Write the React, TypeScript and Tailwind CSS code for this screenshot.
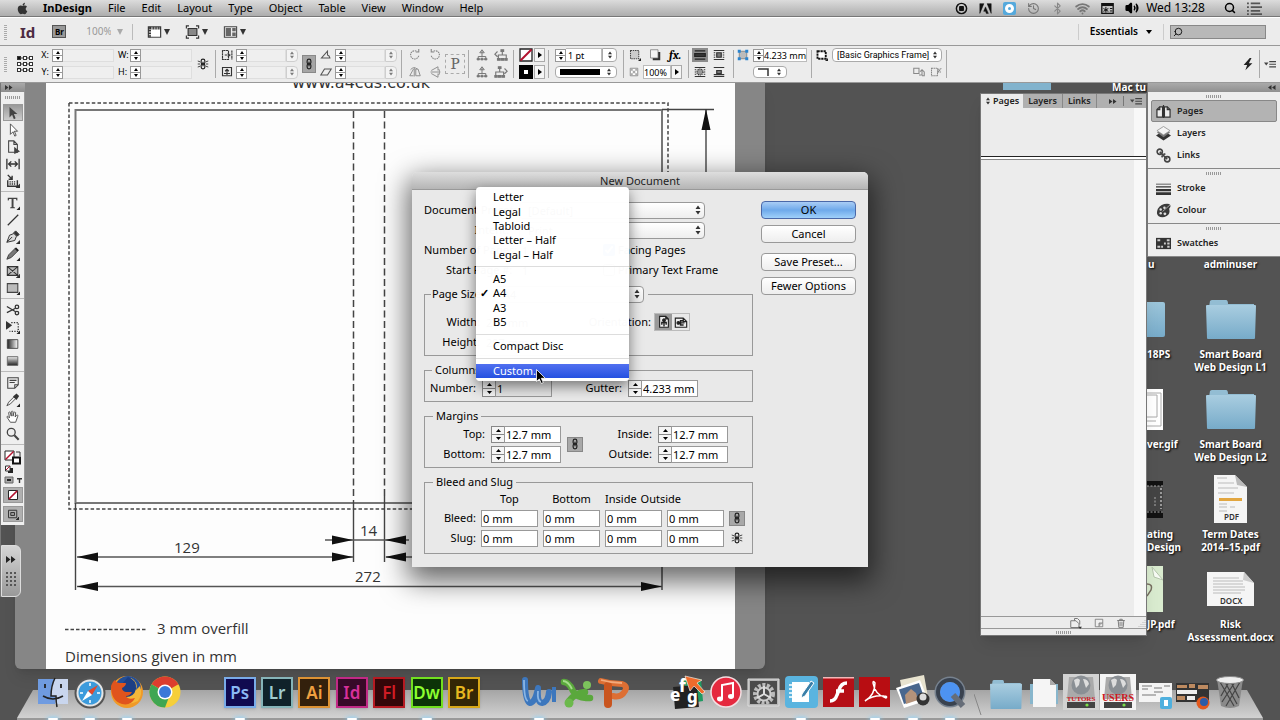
import React from 'react';
import { LuBluetooth, LuHistory, LuSearch, LuVolume2, LuWifi } from 'react-icons/lu';
import { FaApple } from 'react-icons/fa';

type IconProps = { name: string; className?: string };

const LINK = (
  <g fill="none" stroke="#222" strokeWidth="1.6">
    <rect x="5.5" y="1.5" width="5" height="7" rx="2.5" />
    <rect x="5.5" y="7.5" width="5" height="7" rx="2.5" />
    <path d="M8 5v6" />
  </g>
);

const corner = <path d="M16 12v4h-4z" fill="#222" />;

const glyphs: Record<string, React.ReactNode> = {
  link: LINK,
  unlink: (
    <g>
      {LINK}
      <path d="M1 4l3 1M1 8h3M1 12l3-1M15 4l-3 1M15 8h-3M15 12l-3-1" stroke="#444" strokeWidth="1.3" />
    </g>
  ),
  select: <path d="M4 1v12l3-3 2 5 2-1-2-5h4z" fill="#444" />,
  direct: <path d="M5 1v12l3-3 2 5 1.600-.8-2-4.800h3.600z" fill="#fff" stroke="#444" />,
  page: (
    <g fill="none" stroke="#444" strokeWidth="1.2">
      <path d="M3 1h6l4 4v9H3zM9 1v4h4" />
      <path d="M10 9l5 4-5 2z" fill="#444" />
    </g>
  ),
  gap: <path d="M1 2v12M15 2v12M3 8h10M6 5L3 8l3 3M10 5l3 3-3 3" fill="none" stroke="#333" strokeWidth="1.5" />,
  collector: (
    <g fill="none" stroke="#333" strokeWidth="1.6">
      <path d="M2 7v7h11V7M2 1l5 5M7 2v4H3" />
      <path d="M4 9h7M4 11.500h7" strokeDasharray="1.500 1" />
      {corner}
    </g>
  ),
  type: (
    <g>
      <path d="M2 2h11v3h-1l-.6-1.600H8.600v9.200l1.700.6v.8H4.700v-.8l1.700-.6V3.400H3.600L3 5H2z" fill="#444" />
      {corner}
    </g>
  ),
  line: <path d="M2 14L14 2" stroke="#333" strokeWidth="1.4" />,
  pen: (
    <g fill="#ddd" stroke="#333" strokeWidth="1.100">
      <path d="M1 14l3-8 5-2 3 3-2 5zM1 14l6-6" />
      <path d="M9 3l2-2 4 4-2 2z" fill="#333" />
      {corner}
    </g>
  ),
  pencil: (
    <g>
      <path d="M1 14l2-5 8-8 3 3-8 8z" fill="#777" stroke="#333" />
      <path d="M10 2l3 3 1.500-1.500-3-3z" fill="#222" />
      {corner}
    </g>
  ),
  frame: (
    <g fill="#bbb" stroke="#333" strokeWidth="1.200">
      <path d="M1.500 3h12v10h-12zM1.500 3l12 10M13.500 3l-12 10" />
      {corner}
    </g>
  ),
  rect: (
    <g>
      <path d="M1.500 3h12v10h-12z" fill="#bbb" stroke="#444" strokeWidth="1.200" />
      {corner}
    </g>
  ),
  scissors: (
    <g fill="none" stroke="#333" strokeWidth="1.500">
      <path d="M1 4l10 6M1 11l10-5" />
      <circle cx="12.500" cy="4.500" r="2" />
      <circle cx="12.500" cy="11.500" r="2" />
    </g>
  ),
  transform: (
    <g>
      <path d="M0 1v10l3-2 4-3z" fill="#333" />
      <path d="M6 3h8v10H4" fill="none" stroke="#333" strokeWidth="1.500" strokeDasharray="1.500 1.500" />
      {corner}
    </g>
  ),
  gradient: (
    <g>
      <defs>
        <linearGradient id="gr-h">
          <stop stopColor="#222" />
          <stop offset="1" stopColor="#fff" />
        </linearGradient>
      </defs>
      <path d="M1.500 3h12v10h-12z" fill="url(#gr-h)" stroke="#444" />
    </g>
  ),
  feather: (
    <g>
      <defs>
        <linearGradient id="gr-v" x2="0" y2="1">
          <stop stopColor="#eee" />
          <stop offset="1" stopColor="#222" />
        </linearGradient>
      </defs>
      <path d="M1.500 3h12v10h-12z" fill="url(#gr-v)" stroke="#666" />
    </g>
  ),
  note: (
    <g fill="#eee" stroke="#444" strokeWidth="1.200">
      <path d="M2 2h12v8l-4 4H2zM10 14v-4h4M4 5h8M4 7.500h6" />
    </g>
  ),
  eyedropper: (
    <g>
      <path d="M1 14.500l2-4 6-6 2 2-6 6z" fill="#eee" stroke="#444" />
      <path d="M8 4l4-3.500 3 3L12 8z" fill="#333" />
      {corner}
    </g>
  ),
  hand: (
    <path
      d="M5 14l-4-6c0-1 1-1 2 0l1 1-1-6c.5-1 1.500-1 2 0l1 4V2c.5-1 1.500-1 2 0v5l1-4c.5-1 1.500-1 2 0l-.5 5 1.500-2c1-1 1.800 0 1.500 1L11 14z"
      fill="#fff"
      stroke="#444"
    />
  ),
  zoom: (
    <g fill="none" stroke="#444">
      <circle cx="6" cy="6" r="4.500" strokeWidth="1.500" fill="#eee" />
      <path d="M9.500 9.500l5 5" strokeWidth="2.400" />
    </g>
  ),
  none: (
    <g>
      <path d="M2 2h12v12H2z" fill="#fff" stroke="#222" strokeWidth="1.300" />
      <path d="M2.500 13.500l11-11" stroke="#b3122f" strokeWidth="2" />
    </g>
  ),
  preview: (
    <g fill="none" stroke="#333" strokeWidth="1.300">
      <path d="M2 3h11v10H2z" />
      <path d="M5 6h5v4H5z" fill="#999" />
      {corner}
    </g>
  ),
  reference: (
    <g fill="#fff" stroke="#333" strokeWidth="1">
      {[2, 8, 14].map((y) => (
        <g key={y}>
          <path d={`M2 ${y}h12`} />
          {[2, 8, 14].map((x) => (
            <rect key={x} x={x - 1.5} y={y - 1.5} width="3" height="3" fill={x + y === 4 ? '#111' : '#fff'} />
          ))}
        </g>
      ))}
    </g>
  ),
  scaleX: <path d="M2 2v12h8V2z M5 8h6M9 5.500l3 2.500-3 2.500M14.500 2v12" fill="none" stroke="#333" strokeWidth="1.500" strokeDasharray="3 .6" />,
  scaleY: <path d="M2 2h12v11H2zM8 12V5M5.500 7L8 4.500 10.500 7M4 10h8" fill="none" stroke="#333" strokeWidth="1.500" />,
  angle: <path d="M14 12H2l8-9v5q3 1 3 4" fill="none" stroke="#555" strokeWidth="1.400" />,
  shear: <path d="M6 4h9l-5 8H1z" fill="none" stroke="#555" strokeWidth="1.500" />,
  rotateR: (
    <g fill="none" stroke="#888" strokeWidth="1.500">
      <path d="M13 9a5.500 5.500 0 1 1-2-5.500" strokeDasharray="2 1" />
      <path d="M9 4h4V0" />
    </g>
  ),
  rotateL: (
    <g fill="none" stroke="#888" strokeWidth="1.500">
      <path d="M3 9a5.500 5.500 0 1 0 2-5.500" strokeDasharray="2 1" />
      <path d="M7 4H3V0" />
    </g>
  ),
  flipH: <path d="M7 2v12M6 4L1 13h5M9 4h3l3 9H9zM2 5q4-5 9-1" fill="none" stroke="#888" strokeWidth="1.200" />,
  flipV: <path d="M2 8h12M3 6l9-5v5M3 10l9 5v-5M13 4q3 4 0 8" fill="none" stroke="#888" strokeWidth="1.200" />,
  tree: (
    <g fill="none" stroke="#777" strokeWidth="1.300">
      <path d="M8 2v9M3 13v-3h10v3M5 5l3-4 3 4z" />
      <path d="M1.500 12.500h3v2h-3zM6.500 12.500h3v2h-3zM11.500 12.500h3v2h-3z" fill="#777" />
    </g>
  ),
  treeSide: (
    <g fill="none" stroke="#777" strokeWidth="1.300">
      <path d="M5 12V8h9v4M9.500 8V4M4 4L1 7l3 3" />
      <path d="M8 2h3v2H8zM4 12h3v2H4zM8.500 12h3v2h-3zM13 12h2v2h-2z" fill="#777" />
    </g>
  ),
  dottedBox: (
    <g>
      <path d="M2 2h11v11H2z" fill="#ccc" stroke="#444" strokeWidth="1.400" strokeDasharray="2 1" />
      {corner}
    </g>
  ),
  shadowBox: (
    <g>
      <path d="M5 4h10v11H5z" fill="#333" />
      <path d="M2 1h10v11H2z" fill="#f4f4f4" stroke="#777" />
    </g>
  ),
  opacity: (
    <g>
      <path d="M2 2h12v12H2z" fill="#fff" stroke="#555" />
      <path d="M2 2h4v4H2zM10 2h4v4h-4zM6 6h4v4H6zM2 10h4v4H2zM10 10h4v4h-4z" fill="#aaa" />
    </g>
  ),
  wrapNone: <path d="M1 2.500h14M1 13.500h14M1 6h14v4H1z" fill="#333" stroke="#222" strokeWidth="1.600" />,
  wrapBox: (
    <g fill="none" stroke="#333" strokeWidth="1.600">
      <path d="M1 2h14M1 14h14M1 5h2M1 8h2M1 11h2M13 5h2M13 8h2M13 11h2" />
      <path d="M5 5h6v6H5z" fill="#777" />
    </g>
  ),
  wrapShape: (
    <g fill="none" stroke="#333" strokeWidth="1.600">
      <path d="M1 2h14M1 14h14M1 5h2M1 8h2M1 11h2M13 5h2M13 8h2M13 11h2" />
      <circle cx="8" cy="8" r="4" fill="#999" strokeDasharray="1.500 1" />
    </g>
  ),
  wrapJump: <path d="M1 2h14M1 14h14M5 6h6v4H5z M1 11.500h14" fill="#777" stroke="#333" strokeWidth="1.600" />,
  cornerBox: (
    <g>
      <path d="M3 3h10v10H3z" fill="#bbb" stroke="#777" />
      <path d="M1 1h4v4H1zM11 1h4v4h-4zM1 11h4v4H1zM11 11h4v4h-4z" fill="#2a84cf" />
    </g>
  ),
  style: (
    <g>
      <path d="M2 3h11v10H2z" fill="#fff" stroke="#111" strokeWidth="2.500" strokeDasharray="3 1" />
      {corner}
    </g>
  ),
  clear: <path d="M1 3h7v7H1zM8 12h4V5M9.500 7.500L12 5l3 3v5h-3" fill="none" stroke="#888" strokeWidth="1.400" />,
  clearBox: <path d="M2 3h8v10H2zM15 3l-4 5h4M11 8l1-5" fill="none" stroke="#888" strokeWidth="1.400" strokeDasharray="2 .7" />,
  bolt: <path d="M10 1L3 9h4l-2 6 8-8H9l3-6z" fill="#222" />,
  panelMenu: <path d="M0 6h6L3 10zM7 4h9v1.500H7zM7 7.500h9V9H7zM7 11h9v1.500H7z" fill="#444" />,
  viewRulers: (
    <g>
      <path d="M1 2h14v12H1z" fill="#fff" stroke="#444" strokeWidth="1.400" />
      <path d="M1 3.500h14M2.500 2v12" stroke="#333" strokeWidth="3" strokeDasharray="1.200 .6" />
    </g>
  ),
  screenMode: (
    <g fill="none" stroke="#333" strokeWidth="1.300">
      <path d="M1 4V1h3M12 1h3v3M15 12v3h-3M4 15H1v-3" />
      <path d="M3 4h10v8H3z" fill="#888" />
    </g>
  ),
  arrange: (
    <g>
      <path d="M1 2h14v12H1z" fill="#eee" stroke="#444" strokeWidth="1.200" />
      <path d="M2.500 3.500h6v9h-6zM10 3.500h4V7h-4zM10 8.500h4v4h-4z" fill="#666" />
    </g>
  ),
  pages: (
    <g fill="#eee" stroke="#333" strokeWidth="1.300">
      <path d="M7 3v11H1V6l3-3zM9 3v11h6V6l-3-3z" />
      <path d="M8 1v14M4 3v3H1M12 3v3h3" fill="none" />
    </g>
  ),
  layers: (
    <g>
      <path d="M8 5l8 5-8 5.500L0 10z" fill="#333" />
      <path d="M8 3l7 4-7 5-7-5z" fill="#777" />
      <path d="M8 .500l7 4.500-7 4.500L1 5z" fill="#f4f4f4" stroke="#888" strokeWidth=".8" />
    </g>
  ),
  links: (
    <g fill="none" stroke="#444" strokeWidth="1.700">
      <circle cx="4" cy="4" r="2.800" />
      <circle cx="12" cy="12" r="2.800" />
      <path d="M4 4l8 8M8 6l2 1M6 8l1 2" />
    </g>
  ),
  stroke: <path d="M0 3h16v.8H0zM0 5.500h16V7H0zM0 8.500h16v2.300H0zM0 12h16v3H0z" fill="#333" />,
  colour: (
    <g>
      <path d="M2 6Q6 0 14 1q3 2 0 5 2 7-5 9Q2 16 1 11q0-3 1-5z" fill="#3a3a3a" />
      <g fill="#ddd">
        <circle cx="5" cy="7" r="1.300" />
        <circle cx="9" cy="5" r="1.300" />
        <circle cx="5" cy="11" r="1.300" />
        <circle cx="9.500" cy="11.500" r="1.500" />
      </g>
      <path d="M7 9l8-7" stroke="#aaa" />
    </g>
  ),
  swatches: (
    <g>
      <path d="M0 2h16v12H0z" fill="#333" />
      <path d="M1.500 3.500h3v2h-3zM11.500 3.500h3v2h-3zM8.500 7h2v2h-2zM12 7h2.500v2H12zM1.500 10.500h3v2h-3zM5.500 10.500h2v2h-2zM12 10.500h2.500v2H12z" fill="#ccc" />
    </g>
  ),
  trash: <path d="M2 4h12M6 4V2h4v2M3.500 4l1 11h7l1-11M6.500 6v7M9.500 6v7" fill="none" stroke="#777" strokeWidth="1.500" />,
  newPage: (
    <g fill="#eee" stroke="#777" strokeWidth="1.300">
      <path d="M2 2h12v12H2z" />
      <path d="M8 14V8h6" fill="#bbb" />
    </g>
  ),
  editPage: (
    <g fill="#eee" stroke="#777" strokeWidth="1.300">
      <path d="M1 5h7l4 4v5H1zM6 5V2h4l3 3v5" />
      <path d="M11 13h5l-2.500 3z" fill="#333" stroke="none" />
    </g>
  ),
  resize: <path d="M14 2v1M14 6v1M14 10v1M14 14v1M10 6v1M10 10v1M10 14v1M6 10v1M6 14v1M2 14v1" stroke="#888" strokeWidth="2" />,
  portrait: (
    <g fill="#eee" stroke="#222" strokeWidth="1.300">
      <path d="M3 1.500h7l3 3V14H3zM10 1.500v3h3" />
      <circle cx="8" cy="6" r="1.500" fill="#222" />
      <path d="M5.500 11V8.500h5V11M8 8v5" fill="none" strokeWidth="1.600" />
    </g>
  ),
  landscape: (
    <g fill="#eee" stroke="#222" strokeWidth="1.300">
      <path d="M1.500 3.500h9l4 4V14h-13zM10.500 3.500v4h4" />
      <circle cx="5" cy="9" r="1.500" fill="#222" />
      <path d="M11 6.500H7.500v5H11M7 9h5" fill="none" strokeWidth="1.600" />
    </g>
  ),
  record: (
    <g>
      <circle cx="8" cy="8" r="6.300" fill="none" stroke="#111" strokeWidth="1.800" />
      <rect x="5" y="5" width="6" height="6" rx="1" fill="#111" />
    </g>
  ),
  adobe: <path d="M1 2h5L1 14zM10 2h5v12zM8 6l3.500 8H9l-1-2.500H5.800z" fill="#111" stroke="#111" strokeWidth=".6" />,
  keyboard: (
    <g>
      <path d="M1 2h14v12H1z" fill="none" stroke="#111" strokeWidth="1.600" />
      <path d="M1 2h14v3H1z" fill="#111" />
      <path d="M6 6v7M3 8l6 3.500M9 8l-6 3.500M11 8h3M11 11h3" stroke="#111" strokeWidth="1.200" />
    </g>
  ),
  list: <path d="M0 2.500h2M4 2.500h10M0 6.500h2M4 6.500h12M0 10.500h2M4 10.500h10M0 14h2M4 14h12" stroke="#555" strokeWidth="1.800" />,
};

const Icon: React.FC<IconProps> = ({ name, className = 'size-3.5' }) => (
  <svg viewBox="0 0 16 16" className={`shrink-0 ${className}`} aria-hidden="true">
    {glyphs[name]}
  </svg>
);

const Caret = ({ className = 'text-[#333]' }: { className?: string }) => (
  <svg viewBox="0 0 6 6" className={`size-1.5 shrink-0 ${className}`} aria-hidden="true">
    <path d="M0 0h6L3 6z" fill="currentColor" />
  </svg>
);

const UpDown = ({ className = 'h-2.5' }: { className?: string }) => (
  <svg viewBox="0 0 6 10" className={`w-1.5 shrink-0 ${className}`} aria-hidden="true">
    <path d="M.5 4L3 .5 5.500 4zM.5 6L3 9.500 5.500 6z" fill="#333" />
  </svg>
);

const Grip = () => (
  <div className="h-[3px] w-4 bg-[repeating-linear-gradient(90deg,#999_0_1px,#eee_1px_2px)]" />
);

const Divider = () => <div className="h-7 w-px shrink-0 bg-[#aaa]" />;

/* ---------- menu bar ---------- */

const menus = ['File', 'Edit', 'Layout', 'Type', 'Object', 'Table', 'View', 'Window', 'Help'];

const MenuBar = () => (
  <header className="flex h-[17px] shrink-0 items-center justify-between border-b border-[#777] bg-linear-to-b from-[#dcdcdc] to-[#adadad] pr-[18px] pl-4 text-[11px] leading-4 text-black">
    <nav className="flex items-center gap-4">
      <FaApple className="-mr-0.5 size-[13px] text-[#333]" />
      <b>InDesign</b>
      {menus.map((m) => (
        <a key={m} href="#">{m}</a>
      ))}
    </nav>
    <div className="flex items-center gap-[11px]">
      <Icon name="record" className="size-[13px]" />
      <Icon name="adobe" className="size-[13px]" />
      <span className="flex size-[13px] items-center justify-center rounded-xs bg-[#55a9dc]">
        <span className="size-[9px] rounded-full border-[3px] border-white" />
      </span>
      <LuHistory className="size-[13px] text-[#777]" />
      <LuBluetooth className="size-[13px] text-[#888]" />
      <LuWifi className="size-[15px] text-[#777]" strokeWidth={3} />
      <Icon name="keyboard" className="size-[13px]" />
      <LuVolume2 className="size-[14px] fill-black" strokeWidth={2.5} />
      <span className="-ml-1 text-[12px]">Wed 13:28</span>
      <LuSearch className="ml-2 size-[12px]" strokeWidth={3} />
      <Icon name="list" className="size-[15px]" />
    </div>
  </header>
);

/* ---------- application + control bars ---------- */

const BarGrip = () => (
  <div className="h-4 w-[3px] shrink-0 bg-[repeating-linear-gradient(0deg,#aaa_0_1px,#eee_1px_2px)]" />
);

const AppBar = () => (
  <div className="flex h-7 shrink-0 items-center border-t border-white bg-[#ececec] pl-1 text-[11px]">
    <BarGrip />
    <span className="ml-[13px] text-[15px] leading-4 font-bold text-[#4c2b42]">Id</span>
    <button className="ml-[17px] h-[13px] w-[14px] border border-[#555] bg-[#999] text-[8px] leading-[10px] font-bold">Br</button>
    <label className="ml-5 flex items-center gap-1.5 text-[#999]">
      <input aria-label="Zoom" className="w-[25px] bg-transparent text-[10px]" defaultValue="100%" />
      <Caret className="text-[#aaa]" />
    </label>
    <div className="mr-3.5 ml-[9px] h-4 w-px bg-[#bbb]" />
    <button className="mr-[15px] flex items-center gap-0.5" aria-label="View options"><Icon name="viewRulers" className="h-3.5 w-[15px]" /><Caret /></button>
    <button className="mr-[15px] flex items-center gap-0.5" aria-label="Screen mode"><Icon name="screenMode" className="h-3.5 w-[15px]" /><Caret /></button>
    <button className="flex items-center gap-0.5" aria-label="Arrange documents"><Icon name="arrange" className="h-3.5 w-[15px]" /><Caret /></button>
    <div className="ml-auto flex items-center pr-3.5">
      <div className="h-4 w-px bg-[#ccc]" />
      <button className="mx-[11px] flex items-center gap-2 text-[10px] font-semibold">Essentials <svg viewBox="0 0 6 6" className="size-1.5"><path d="M0 1h6L3 5z" /></svg></button>
      <div className="mr-1.5 h-4 w-px bg-[#ccc]" />
      <label className="flex h-3.5 w-24 items-center border border-[#888] bg-[#b8b8b8] px-0.5">
        <LuSearch className="size-2.5 shrink-0 -scale-x-100" />
        <input aria-label="Search" className="w-full bg-transparent" />
      </label>
    </div>
  </div>
);

const MiniStepper = () => (
  <span className="flex h-[13px] w-[11px] shrink-0 flex-col border border-[#999] bg-white">
    <button aria-label="Increase" className="flex flex-1 items-center justify-center border-b border-[#999]">
      <svg viewBox="0 0 4 3" className="h-[3px] w-1"><path d="M0 3L2 0l2 3z" /></svg>
    </button>
    <button aria-label="Decrease" className="flex flex-1 items-center justify-center">
      <svg viewBox="0 0 4 3" className="h-[3px] w-1"><path d="M0 0h4L2 3z" /></svg>
    </button>
  </span>
);

const BlankField = ({ label, icon, combo }: { label: string; icon?: string; combo?: boolean }) => (
  <label className="flex h-[17px] items-center">
    {icon ? <Icon name={icon} className="mr-[3px] size-3" /> : <span className="mr-[3px] w-[9px] text-right">{label}</span>}
    <MiniStepper />
    <input aria-label={label} className={`h-[13px] border border-l-0 border-[#dedede] bg-[#efefef] ${combo ? 'w-[39px]' : 'w-[51px]'}`} />
    {combo && (
      <span className="flex h-[13px] w-[12px] items-center justify-center rounded-r-sm border border-[#bbb] bg-[#f8f8f8] opacity-60">
        <UpDown className="h-2" />
      </span>
    )}
  </label>
);

const Pair = ({ children, className = '' }: { children: React.ReactNode; className?: string }) => (
  <div className={`flex shrink-0 flex-col *:h-[17px] ${className}`}>{children}</div>
);

const Row = ({ children }: { children: React.ReactNode }) => <div className="flex items-center">{children}</div>;

const NextButton = () => (
  <button aria-label="More" className="flex h-[14px] w-[11px] items-center justify-center border border-[#aaa] bg-[#f5f5f5]">
    <svg viewBox="0 0 4 6" className="h-1.5 w-1"><path d="M0 0l4 3-4 3z" /></svg>
  </button>
);

const ControlBar = () => (
  <div className="flex h-[38px] shrink-0 items-center overflow-hidden border-y border-[#999] bg-[#ececec] pb-px pl-1 text-[9px]">
    <BarGrip />
    <Icon name="reference" className="ml-2.5 size-4" />
    <Pair className="ml-[7px]">
      <BlankField label="X:" />
      <BlankField label="Y:" />
    </Pair>
    <Pair className="ml-1">
      <BlankField label="W:" />
      <BlankField label="H:" />
    </Pair>
    <Icon name="unlink" className="mr-1.5 ml-[5px] size-3" />
    <Divider />
    <Pair className="ml-[5px]">
      <BlankField label="Scale X" icon="scaleX" combo />
      <BlankField label="Scale Y" icon="scaleY" combo />
    </Pair>
    <button aria-label="Constrain scale" className="mx-1 flex h-[18px] w-[14px] items-center justify-center border border-[#888] bg-[#a5a5a5]">
      <Icon name="link" className="size-3" />
    </button>
    <Pair>
      <BlankField label="Rotation" icon="angle" combo />
      <BlankField label="Shear" icon="shear" combo />
    </Pair>
    <span className="w-1" />
    <Divider />
    <Pair className="ml-[7px] w-[30px]">
      <div className="flex items-center gap-2"><Icon name="rotateR" className="size-3" /><Icon name="rotateL" className="size-3" /></div>
      <div className="flex items-center gap-2"><Icon name="flipH" className="size-3" /><Icon name="flipV" className="size-3" /></div>
    </Pair>
    <span className="mr-[3px] ml-1.5 flex h-5 w-5 items-center justify-center border border-dashed border-[#aaa] font-serif text-[17px] text-[#666]">P</span>
    <Divider />
    <Pair className="mr-1 ml-[7px] w-[33px]">
      <div className="flex items-center gap-1.5"><Icon name="tree" className="size-3" /><Icon name="treeSide" /></div>
      <div className="flex items-center gap-1.5"><Icon name="tree" className="size-3" /><Icon name="treeSide" className="size-3.5 -scale-x-100" /></div>
    </Pair>
    <Divider />
    <Pair className="mr-[3px] ml-1">
      <Row><Icon name="none" className="size-4" /><NextButton /></Row>
      <Row>
        <span className="mx-px flex size-3.5 items-center justify-center bg-black"><span className="size-1 bg-white" /></span>
        <NextButton />
      </Row>
    </Pair>
    <Divider />
    <Pair className="mx-1.5 w-[62px]">
      <Row>
        <MiniStepper />
        <input aria-label="Stroke weight" className="h-[14px] w-9 border border-l-0 border-[#bbb] bg-white pl-0.5" defaultValue="1 pt" />
        <span className="flex h-[14px] flex-1 items-center justify-center rounded-r-sm border border-[#aaa] bg-white"><UpDown className="h-2" /></span>
      </Row>
      <Row>
        <button aria-label="Stroke type" className="flex h-3 w-full items-center justify-between rounded-sm border border-[#aaa] bg-white px-1">
          <span className="h-1.5 w-10 bg-black" />
          <UpDown className="h-2" />
        </button>
      </Row>
    </Pair>
    <Divider />
    <Pair className="mr-1 ml-[5px] w-[55px]">
      <div className="flex items-center gap-2"><Icon name="dottedBox" className="size-3" /><Icon name="shadowBox" className="size-3" /><i className="font-serif text-[12px] font-bold">fx.</i></div>
      <Row>
        <Icon name="opacity" className="mr-1 size-2.5" />
        <input aria-label="Opacity" className="h-[14px] w-[28px] border border-[#bbb] bg-white" defaultValue="100%" />
        <NextButton />
      </Row>
    </Pair>
    <Divider />
    <Pair className="mr-1 ml-[3px] w-[37px]">
      <div className="flex items-center gap-[5px]"><span className="flex h-[14px] w-4 items-center justify-center bg-[#8c8c8c]"><Icon name="wrapNone" className="size-3" /></span><Icon name="wrapBox" className="size-3" /></div>
      <div className="flex items-center gap-[7px] pl-0.5"><Icon name="wrapShape" className="size-3" /><Icon name="wrapJump" className="size-3" /></div>
    </Pair>
    <Divider />
    <Pair className="mr-1 ml-[3px] w-[70px]">
      <Row>
        <Icon name="cornerBox" className="mr-1 size-3" />
        <MiniStepper />
        <input aria-label="Corner size" className="h-[14px] w-[43px] border border-l-0 border-[#bbb] bg-white" defaultValue="4.233 mm" />
      </Row>
      <Row>
        <button aria-label="Corner shape" className="ml-4 flex h-3 w-[34px] items-center justify-between rounded-sm border border-[#aaa] bg-white px-1">
          <svg viewBox="0 0 12 8" className="h-2 w-3"><path d="M0 1h10v7" fill="none" stroke="#333" strokeWidth="1.500" /></svg>
          <UpDown className="h-2" />
        </button>
      </Row>
    </Pair>
    <Divider />
    <Pair className="mr-1 ml-1 w-[126px]">
      <Row>
        <Icon name="style" className="mr-1 size-3" />
        <span className="relative flex flex-1 items-center">
          <select aria-label="Object style" className="h-[14px] w-full appearance-none rounded-sm border border-[#aaa] bg-white pl-1 font-['Roboto','Noto_Sans',sans-serif] text-[9px] leading-3">
            <option>[Basic Graphics Frame]</option>
          </select>
          <span className="pointer-events-none absolute right-1"><UpDown className="h-2" /></span>
        </span>
      </Row>
      <div className="flex items-center justify-end gap-[5px]"><Icon name="clear" className="size-3" /><Icon name="clearBox" className="size-3" /></div>
    </Pair>
    <Divider />
    <div className="ml-auto flex items-center pr-1">
      <Icon name="bolt" className="mr-1 size-3.5" />
      <Divider />
      <Icon name="panelMenu" className="ml-1 size-3" />
    </div>
  </div>
);

/* ---------- tools ---------- */

const toolGroups = [
  ['select', 'direct', 'page', 'gap', 'collector'],
  ['type', 'line', 'pen', 'pencil', 'frame', 'rect'],
  ['scissors', 'transform', 'gradient', 'feather'],
  ['note', 'eyedropper', 'hand', 'zoom'],
];

const Toolbar = () => (
  <aside className="relative flex w-[25px] flex-col border-l border-[#777]">
    <div className="flex h-[9px] items-center bg-linear-to-b from-[#aaa] to-[#8c8c8c] pl-1 text-[#333]">
      <svg viewBox="0 0 8 5" className="h-[5px] w-2"><path d="M0 0l3.500 2.500L0 5zM4 0l3.500 2.500L4 5z" fill="#333" /></svg>
    </div>
    <div className="flex flex-col items-center border-r border-[#999] bg-[#efefef]">
      <div className="flex h-2.5 items-center"><Grip /></div>
      {toolGroups.map((group, g) => (
        <div key={g} className="flex w-full flex-col items-center border-b border-[#bbb] pb-0.5 not-first:pt-0.5">
          {group.map((t) => (
            <button
              key={t}
              aria-label={t}
              className={`flex h-[17px] w-5 items-center justify-center ${t === 'select' ? 'border border-[#999] bg-linear-to-b from-[#999] to-[#ccc]' : ''}`}
            >
              <Icon name={t} />
            </button>
          ))}
        </div>
      ))}
      <svg viewBox="0 0 20 38" className="mt-1 h-[38px] w-5" aria-hidden="true">
        <path d="M2 2h9v9H2z" fill="#fff" stroke="#222" />
        <path d="M2.500 10.500l8-8" stroke="#b3122f" strokeWidth="1.500" />
        <path d="M10 8.500h7v6h-7z" fill="#fff" stroke="#111" strokeWidth="2" />
        <path d="M13 3h4v4" fill="none" stroke="#333" />
        <path d="M5 19h5v5H5z" fill="#222" />
        <path d="M2.500 17h4.500v5H2.500z" fill="#fff" stroke="#333" />
        <path d="M3 21l4-4" stroke="#b3122f" />
        <path d="M2 28h8v6H2z" fill="#aaa" stroke="#666" />
        <path d="M4 30h4v2H4z" fill="#222" />
        <path d="M14 29h5v1.500h-1.800V34h-1.400v-3.500H14z" fill="#333" />
      </svg>
      <button aria-label="Apply none" className="flex h-4 w-5 items-center justify-center border border-[#999] bg-[#b0b0b0]"><Icon name="none" className="size-3" /></button>
      <button aria-label="Preview" className="my-[3px] flex h-4 w-5 items-center justify-center border border-[#999] bg-[#b0b0b0]"><Icon name="preview" className="size-3" /></button>
    </div>
    <button aria-label="Show drawer" className="mt-5 flex h-[52px] w-5 flex-col items-center justify-center gap-2 rounded-r-md border border-[#ddd] bg-linear-to-b from-[#d5d5d5] to-[#999]">
      <svg viewBox="0 0 10 7" className="h-[7px] w-2.5"><path d="M0 0l4.500 3.500L0 7zM5 0l4.500 3.500L5 7z" fill="#222" /></svg>
      <span className="h-4 w-3 bg-[radial-gradient(#555_1px,transparent_1px)] bg-size-[4px_4px]" />
    </button>
  </aside>
);

/* ---------- document window ---------- */

const Arrow = ({ x, y, dir }: { x: number; y: number; dir: 1 | -1 }) => (
  <path d={`M${x} ${y}l${-21 * dir} -4.500v9z`} fill="#111" />
);

const CoverDrawing = () => (
  <svg viewBox="46 83 689 586" className="mx-auto block h-full w-[689px] bg-[#fdfdfd]" fontFamily="'Open Sans', 'Noto Sans', sans-serif">
    <text x="361" y="88" fontSize="16" textAnchor="middle" fontFamily="'DejaVu Sans', sans-serif" fill="#333">www.a4cds.co.uk</text>
    <g fill="none" stroke="#444">
      <path d="M69 103H668V509H69z" strokeWidth="1.500" strokeDasharray="3.500 2.200" />
      <path d="M75.500 110H662V503H75.500z" stroke="#777" strokeWidth="2" />
      <path d="M353.500 111V498M384.500 111V498" strokeWidth="1.500" strokeDasharray="7 3.500" />
      <path d="M353.500 500V562M384.500 496V562M75.500 503V590M662 503V590M662 109.500H714M706 110V560" strokeWidth="1.400" />
      <path d="M77 557H353M386 557H662M77 586.500H662M325 540H409" stroke="#555" strokeWidth="1.500" />
      <path d="M65 629.500H147" strokeWidth="1.500" strokeDasharray="3.500 2" />
    </g>
    <path d="M706 109l-4.500 21h9z" fill="#111" />
    <Arrow x={77} y={557} dir={-1} />
    <Arrow x={353} y={557} dir={1} />
    <Arrow x={385} y={557} dir={-1} />
    <Arrow x={353} y={540} dir={1} />
    <Arrow x={385} y={540} dir={-1} />
    <Arrow x={77} y={586.5} dir={-1} />
    <Arrow x={662} y={586.5} dir={1} />
    <g fill="#333" fontSize="15">
      <text x="174" y="553">129</text>
      <text x="360" y="536">14</text>
      <text x="355" y="582">272</text>
      <text x="157" y="634">3 mm overfill</text>
      <text x="65" y="662">Dimensions given in mm</text>
    </g>
  </svg>
);

/* ---------- right hand panels ---------- */

const PagesPanel = () => (
  <section className="absolute top-2.5 right-[133px] flex h-[543px] w-[167px] flex-col border border-[#777] bg-[#ececec] text-[9px] shadow-lg">
    <div className="flex h-[14px] items-center bg-[#b0b0b0] leading-[14px] font-semibold text-[#222]">
      <button className="flex h-full items-center gap-0.5 bg-[#ececec] px-1"><UpDown className="h-2" />Pages</button>
      <button className="h-full border-r border-[#888] px-[5px]">Layers</button>
      <button className="h-full border-r border-[#888] px-[5px]">Links</button>
      <span className="mr-1 ml-auto flex items-center gap-1.5">
        <svg viewBox="0 0 8 5" className="h-[5px] w-2"><path d="M0 0l3.500 2.500L0 5zM4 0l3.500 2.500L4 5z" fill="#333" /></svg>
        <span className="h-2.5 w-px bg-[#777]" />
        <Icon name="panelMenu" className="size-3" />
      </span>
    </div>
    <div className="h-12 border-r-12 border-[#f8f8f8]" />
    <div className="h-1 border-t border-b border-[#222] border-b-[#888] bg-white" />
    <div className="flex-1 border-r-12 border-[#f8f8f8]" />
    <div className="flex h-[13px] items-center justify-end gap-3 border-y border-[#999]">
      <Icon name="editPage" className="size-3" />
      <Icon name="newPage" className="size-2.5" />
      <Icon name="trash" className="size-2.5" />
      <Icon name="resize" className="size-2" />
    </div>
    <div className="flex h-1.5 items-center justify-center"><Grip /></div>
  </section>
);

const dockGroups = [
  [['Pages', 'pages'], ['Layers', 'layers'], ['Links', 'links']],
  [['Stroke', 'stroke'], ['Colour', 'colour']],
  [['Swatches', 'swatches']],
];

const PanelDock = () => (
  <aside className="relative ml-auto flex w-[133px] flex-col border-l border-[#777] text-[9px] font-semibold text-[#222]">
    <div className="flex h-[9px] items-center justify-end bg-linear-to-b from-[#aaa] to-[#909090] pr-1">
      <svg viewBox="0 0 8 5" className="h-[5px] w-2"><path d="M3.500 0L0 2.500 3.500 5zM7.500 0L4 2.500 7.500 5z" fill="#333" /></svg>
    </div>
    {dockGroups.map((group, g) => (
      <div key={g} className="border-b border-[#888] bg-[#eee] px-[3px] pb-0.5">
        <div className="flex h-2 items-center justify-center"><Grip /></div>
        {group.map(([label, icon]) => (
          <button
            key={label}
            className={`flex h-[22px] w-full items-center gap-1.5 px-1 ${label === 'Pages' ? 'rounded-xs border border-[#888] bg-[#b3b3b3]' : 'border border-transparent'}`}
          >
            <Icon name={icon} className="size-[15px]" />
            {label}
          </button>
        ))}
      </div>
    ))}
  </aside>
);

/* ---------- desktop ---------- */

const Folder = ({ className = 'h-[39px] w-[50px]' }: { className?: string }) => (
  <svg viewBox="0 0 50 39" preserveAspectRatio="none" className={className} aria-hidden="true">
    <defs>
      <linearGradient id="folder" x2="0" y2="1">
        <stop stopColor="#a9cde0" />
        <stop offset="1" stopColor="#77abc9" />
      </linearGradient>
    </defs>
    <path d="M4 1q1-1 2-1h14q2 0 2 4h26v3H3z" fill="#93bdd3" />
    <path d="M0 6q0-1 1-1h48q1 0 1 1l-1 32q0 1-1 1H2q-1 0-1-1z" fill="url(#folder)" />
  </svg>
);

const Sheet = ({ kind }: { kind: string }) => {
  const wide = kind === 'DOCX';
  return (
    <svg viewBox={wide ? '0 0 47 34' : '0 0 33 48'} className={`text-shadow-none ${wide ? 'h-[34px] w-[47px]' : 'h-12 w-[33px]'}`}>
      {wide ? (
        <g>
          <path d="M0 0h37l10 11v23H0z" fill="#f5f5f5" />
          <path d="M37 0l-1 8 11 3z" fill="#ccc" />
          <path d="M6 6h26M6 9h30M6 12h30M6 15h32M6 18h32M6 21h28" stroke="#bbb" />
          <text x="13" y="32" fontSize="8" fontWeight="600" fill="#333">DOCX</text>
        </g>
      ) : (
        <g>
          <path d="M0 0h21l12 12v36H0z" fill="#f5f5f5" />
          <path d="M21 0l2 10 10 2z" fill="#bbb" />
          <path d="M3 3h10M4 8h16M4 13h20M4 18h16M5 29h8M5 32h8M16 32h5M5 36h8" stroke="#bbb" />
          <path d="M5 23h23v3H5z" fill="#e2a640" />
          <text x="10" y="45" fontSize="8" fontWeight="600" fill="#333">PDF</text>
        </g>
      )}
    </svg>
  );
};

const DesktopItem = ({ children, lines, left }: { children: React.ReactNode; lines: string[]; left?: boolean }) => (
  <figure className={`flex h-[90px] flex-col whitespace-nowrap ${left ? 'items-start' : 'items-center'}`}>
    <div className="flex h-[52px] items-center">{children}</div>
    <figcaption className={`mt-[3px] flex flex-col leading-[13px] ${left ? '' : 'text-center'}`}>
      {lines.map((l) => (
        <span key={l}>{l}</span>
      ))}
    </figcaption>
  </figure>
);

const Desktop = () => (
  <div className="absolute top-0 right-0 flex text-[10px] font-bold text-white text-shadow-[1px_1px_2px_#000]">
    <div className="mr-[61px] h-[7px] w-12 bg-[#82b3cd]" />
    <div className="h-4 w-[35px] overflow-hidden leading-2 whitespace-nowrap">Mac tu</div>
    <div className="w-[34px] pt-[175px]">
      <div className="mb-[22px] pl-px leading-[13px]">u</div>
      <DesktopItem left lines={['18PS']}><div className="h-[35px] w-[18px] rounded-r-xs bg-linear-to-b from-[#9cc5da] to-[#77abc9]" /></DesktopItem>
      <DesktopItem left lines={['ver.gif']}>
        <svg viewBox="0 0 16 41" className="h-[41px] w-4"><path d="M0 0h16v41H0z" fill="#fff" /><path d="M0 4h14v33H0M0 6h10v22H0M0 32h9" fill="none" stroke="#aaa" /></svg>
      </DesktopItem>
      <DesktopItem left lines={['ating', 'Design']}>
        <svg viewBox="0 0 16 37" className="h-[37px] w-4"><path d="M0 0h16v37H0z" fill="#111" /><path d="M0 5h16v25H0z" fill="#444" /><path d="M0 5h16M0 31h16M8 16v9" stroke="#aaa" strokeDasharray="2 1.500" /><path d="M14 7v21" stroke="#999" strokeWidth="2" strokeDasharray="2 2" /></svg>
      </DesktopItem>
      <DesktopItem left lines={['JP.pdf']}>
        <svg viewBox="0 0 16 46" className="h-[46px] w-4"><path d="M0 0h16v46H0z" fill="#d9ebcf" /><path d="M5 1l2 10 9 3z" fill="#f7fbf4" stroke="#b5c5ac" /><path d="M0 18q6 0 4 6l-4 6" fill="none" stroke="#776f60" strokeWidth="1.500" /></svg>
      </DesktopItem>
    </div>
    <div className="w-[99px] pt-[175px]">
      <div className="mb-[22px] text-center leading-[13px]">adminuser</div>
      <DesktopItem lines={['Smart Board', 'Web Design L1']}><Folder /></DesktopItem>
      <DesktopItem lines={['Smart Board', 'Web Design L2']}><Folder /></DesktopItem>
      <DesktopItem lines={['Term Dates', '2014–15.pdf']}><Sheet kind="PDF" /></DesktopItem>
      <DesktopItem lines={['Risk', 'Assessment.docx']}><Sheet kind="DOCX" /></DesktopItem>
    </div>
  </div>
);

/* ---------- new document dialog ---------- */

const Stepper = () => (
  <span className="flex h-[17px] w-[13px] shrink-0 flex-col border border-r-0 border-[#888] bg-[#f5f5f5]">
    <button type="button" aria-label="Increase" className="flex flex-1 items-center justify-center border-b border-[#888]">
      <svg viewBox="0 0 5 3" className="h-[3px] w-[5px]"><path d="M0 3L2.500 0 5 3z" /></svg>
    </button>
    <button type="button" aria-label="Decrease" className="flex flex-1 items-center justify-center">
      <svg viewBox="0 0 5 3" className="h-[3px] w-[5px]"><path d="M0 0h5L2.500 3z" /></svg>
    </button>
  </span>
);

const Field = ({ id, label, value, labelWidth, grey }: { id: string; label: string; value: string; labelWidth: string; grey?: boolean }) => (
  <div className="flex h-5 items-center">
    <label htmlFor={id} className={`mr-1.5 shrink-0 text-right ${labelWidth}`}>{label}</label>
    <Stepper />
    <input id={id} defaultValue={value} className={`h-[17px] w-[57px] border border-[#999] px-px ${grey ? 'bg-[#e4e4e4]' : 'bg-white'}`} />
  </div>
);

const LinkButton = ({ off }: { off?: boolean }) => (
  <button type="button" aria-label="Make all settings the same" className={`flex h-[15px] w-4 items-center justify-center ${off ? '' : 'border border-[#888] bg-[#a8a8a8]'}`}>
    <Icon name={off ? 'unlink' : 'link'} className="size-3" />
  </button>
);

const PopSelect = ({ id, value, className }: { id: string; value: string; className: string }) => (
  <span className={`relative flex items-center ${className}`}>
    <select id={id} className="h-[17px] w-full appearance-none rounded-sm border border-[#999] bg-linear-to-b from-white to-[#eee] pl-2 leading-[15px]">
      <option>{value}</option>
    </select>
    <span className="pointer-events-none absolute right-1"><UpDown /></span>
  </span>
);

const sizes = [['Letter', 'Legal', 'Tabloid', 'Letter – Half', 'Legal – Half'], ['A5', 'A4', 'A3', 'B5'], ['Compact Disc'], ['Custom...']];

const SizeMenu = () => (
  <ul className="absolute top-[15px] left-16 flex h-[194px] w-[153px] flex-col rounded-sm bg-white/98 pt-[3px] pb-[3px] shadow-[0_5px_14px_rgba(0,0,0,0.5)]" role="menu">
    {sizes.map((group, g) => (
      <React.Fragment key={g}>
        {g > 0 && <li role="separator" className="flex h-2.5 items-center"><span className="h-px w-full bg-[#ddd]" /></li>}
        {group.map((s) => (
          <li
            key={s}
            role="menuitem"
            className={`flex flex-1 items-center pl-1 leading-3 ${s === 'Custom...' ? 'bg-linear-to-b from-[#5170f0] to-[#2450e0] text-white' : ''}`}
          >
            <span className="w-[13px] font-bold">{s === 'A4' ? '✓' : ''}</span>
            {s}
          </li>
        ))}
      </React.Fragment>
    ))}
    <li aria-hidden="true" className="pointer-events-none absolute top-[182px] left-[60px]">
      <svg viewBox="0 0 10 15" className="h-[15px] w-2.5"><path d="M.5.500v12l2.800-2.500 2 4.500 2-.9-2-4.300h4z" fill="#000" stroke="#fff" strokeWidth=".8" /></svg>
    </li>
  </ul>
);

const bleedRows = ['Bleed', 'Slug'];
const edges = ['Top', 'Bottom', 'Inside', 'Outside'];

const NewDocumentDialog = () => (
  <div role="dialog" aria-label="New Document" className="relative w-[456px] rounded-t-[5px] bg-[#e9e9e9] text-[11px] leading-4 whitespace-nowrap text-black shadow-[0_10px_28px_4px_rgba(0,0,0,0.6)]">
    <h1 className="h-[18px] rounded-t-[5px] border-b border-[#999] bg-linear-to-b from-[#dedede] to-[#b5b5b5] text-center leading-[18px] text-[#222]">New Document</h1>
    <div className="flex gap-2 px-3 pt-2.5 pb-[13px]">
      <form className="w-[329px]">
        <div className="flex h-5 items-center"><label htmlFor="preset" className="w-[95px]">Document Preset:</label><PopSelect id="preset" value="[Default]" className="w-[186px]" /></div>
        <div className="flex h-5 items-center"><label htmlFor="intent" className="w-[89px] pr-1 text-right">Intent:</label><PopSelect id="intent" value="Print" className="ml-1.5 w-[186px]" /></div>
        <div className="flex h-5 items-center">
          <label htmlFor="pages" className="w-[98px] shrink-0">Number of Pages:</label>
          <input id="pages" defaultValue="1" className="h-[17px] w-[50px] bg-[#f3f3f3]" />
          <label className="ml-auto flex w-[150px] items-center gap-[3px]"><input type="checkbox" defaultChecked className="size-3" />Facing Pages</label>
        </div>
        <div className="flex h-5 items-center">
          <label htmlFor="start" className="ml-[22px] w-[76px] shrink-0">Start Page #:</label>
          <input id="start" defaultValue="1" className="h-[17px] w-[50px] bg-[#f3f3f3]" />
          <label className="ml-auto flex w-[150px] items-center gap-[3px]"><input type="checkbox" className="size-3" />Primary Text Frame</label>
        </div>

        <fieldset className="mt-1.5 h-[70px] border border-[#999]">
          <legend className="ml-1.5 flex h-4 items-center px-px pr-1"><label htmlFor="size" className="mr-1 w-[58px]">Page Size:</label><PopSelect id="size" value="A4" className="w-[150px]" /></legend>
          <div className="mt-2.5 flex h-5 items-center">
            <label htmlFor="width" className="w-[55px] text-right">Width:</label>
            <input id="width" defaultValue="210 mm" className="ml-1.5 h-[17px] w-[70px] bg-[#f3f3f3]" />
            <span className="ml-auto">Orientation:</span>
            <span className="mr-[62px] ml-[3px] flex border border-[#bbb]">
              <button type="button" aria-label="Portrait" className="flex h-4 w-[17px] items-center justify-center bg-[#999]"><Icon name="portrait" className="size-3.5" /></button>
              <button type="button" aria-label="Landscape" className="flex h-4 w-[17px] items-center justify-center"><Icon name="landscape" className="size-3.5" /></button>
            </span>
          </div>
          <div className="flex h-5 items-center">
            <label htmlFor="height" className="w-[55px] text-right">Height:</label>
            <input id="height" defaultValue="297 mm" className="ml-1.5 h-[17px] w-[70px] bg-[#f3f3f3]" />
          </div>
        </fieldset>

        <fieldset className="mt-1.5 h-10 border border-[#999]">
          <legend className="ml-[7px] h-4 px-[3px]">Columns</legend>
          <div className="flex">
            <Field id="number" label="Number:" value="1" labelWidth="w-[51px]" grey />
            <Field id="gutter" label="Gutter:" value="4.233 mm" labelWidth="w-[70px]" />
          </div>
        </fieldset>

        <fieldset className="mt-1.5 h-[60px] border border-[#999]">
          <legend className="ml-2 h-4 px-[3px]">Margins</legend>
          <div className="flex items-center">
            <div>
              <Field id="top" label="Top:" value="12.7 mm" labelWidth="w-[60px]" />
              <Field id="bottom" label="Bottom:" value="12.7 mm" labelWidth="w-[60px]" />
            </div>
            <span className="ml-1.5"><LinkButton /></span>
            <div>
              <Field id="inside" label="Inside:" value="12.7 mm" labelWidth="w-[69px]" />
              <Field id="outside" label="Outside:" value="12.7 mm" labelWidth="w-[69px]" />
            </div>
          </div>
        </fieldset>

        <fieldset className="mt-1.5 h-20 border border-[#999]">
          <legend className="ml-2 h-4 px-[3px]">Bleed and Slug</legend>
          <div className="grid grid-cols-[51px_57px_57px_57px_57px_16px] items-center gap-x-[5px]">
            <span className="h-[18px]" />
            <span className="text-center">Top</span>
            <span className="text-center">Bottom</span>
            <span className="col-span-2 flex gap-1"><span>Inside</span><span>Outside</span></span>
            <span />
            {bleedRows.map((r) => (
              <React.Fragment key={r}>
                <span className="h-5 text-right leading-5">{r}:</span>
                {edges.map((e) => (
                  <input key={e} aria-label={`${r} ${e}`} defaultValue="0 mm" className="h-[17px] w-full border border-[#999] bg-white px-px" />
                ))}
                <LinkButton off={r === 'Slug'} />
              </React.Fragment>
            ))}
          </div>
        </fieldset>
      </form>

      <div className="flex flex-1 flex-col pt-px *:h-[18px] *:rounded-sm *:border *:leading-4">
        <button className="border-[#4a68a8] bg-linear-to-b from-[#a9cdf5] via-[#6ea9ea] to-[#9fd0fa]">OK</button>
        <button className="mt-1.5 border-[#999] bg-linear-to-b from-white to-[#eee]">Cancel</button>
        <button className="mt-2.5 border-[#999] bg-linear-to-b from-white to-[#eee]">Save Preset...</button>
        <button className="mt-1.5 border-[#999] bg-linear-to-b from-white to-[#eee]">Fewer Options</button>
      </div>
    </div>
    <SizeMenu />
  </div>
);

/* ---------- dock ---------- */

const AdobeTile = ({ text, tile }: { text: string; tile: string }) => (
  <span className={`flex h-[31px] w-8 items-center justify-center border-2 text-[17px] leading-none font-semibold shadow ${tile}`}>{text}</span>
);

const DockArt = ({ children }: { children: React.ReactNode }) => (
  <svg viewBox="0 0 36 36" className="size-9 shrink-0" aria-hidden="true">{children}</svg>
);

const dockItems: Record<string, React.ReactNode> = {
  Finder: (
    <DockArt>
      <path d="M3 5h30v25H3z" fill="#6f9be0" />
      <path d="M20 5h13v25H20q1-5 0-8h-4q0-10 4-17z" fill="#c9d6ee" />
      <path d="M20 4q-4 8-4 18h5q0 6 1 11M8 22q10 6 20 0" fill="none" stroke="#222" strokeWidth="1.500" />
      <path d="M10 10v4M26 10v4" stroke="#222" strokeWidth="1.800" />
    </DockArt>
  ),
  Safari: (
    <DockArt>
      <circle cx="18" cy="19" r="15.500" fill="#555" />
      <circle cx="18" cy="19" r="13.500" fill="#e5e5e5" />
      <circle cx="18" cy="19" r="11.500" fill="#3c9bdc" />
      <path d="M18 9v3M18 26v3M8 19h3M25 19h3" stroke="#fff" strokeWidth="1.500" />
      <path d="M26 11l-6 10-4-4z" fill="#e2482d" />
      <path d="M10 27l6-10 4 4z" fill="#fff" />
    </DockArt>
  ),
  Firefox: (
    <DockArt>
      <circle cx="18" cy="18" r="16" fill="#f09a28" />
      <circle cx="19" cy="15" r="13" fill="#234f98" />
      <path d="M22 4q8 4 5 12l4-4q3 8-2 15-12 6-20-1z" fill="#f5b73a" />
      <path d="M19 3q9 3 8 12-2 8-10 8-7-2-5-12z" fill="#1d3f85" />
      <path d="M2 12q2-5 4-6 1 3 5 3l6 0q0 3-4 5 0 3 4 4h6q-2 4-6 4 2 4 9 2-4 8-13 6Q2 27 2 12z" fill="#e0541d" />
    </DockArt>
  ),
  Chrome: (
    <DockArt>
      <circle cx="18" cy="18" r="15.500" fill="#f6cf3a" />
      <path d="M18 18L4.600 10.200A15.500 15.500 0 0 1 31.400 10.200z" fill="#dc3d2e" />
      <path d="M18 18L4.600 10.200A15.500 15.500 0 0 0 18 33.500l5-13z" fill="#3fa652" />
      <circle cx="18" cy="18" r="7.500" fill="#fff" />
      <circle cx="18" cy="18" r="6" fill="#3a78d8" />
    </DockArt>
  ),
  Photoshop: <AdobeTile text="Ps" tile="border-[#79abe8] bg-[#100a50] text-[#8ab9f5]" />,
  Lightroom: <AdobeTile text="Lr" tile="border-[#86b4b8] bg-[#10222a] text-[#a0cdd0]" />,
  Illustrator: <AdobeTile text="Ai" tile="border-[#dc9234] bg-[#33200c] text-[#f0a040]" />,
  InDesign: <AdobeTile text="Id" tile="border-[#c22a86] bg-[#380a28] text-[#d8309a]" />,
  Flash: <AdobeTile text="Fl" tile="border-[#b51a22] bg-[#330608] text-[#cf1c24]" />,
  Dreamweaver: <AdobeTile text="Dw" tile="border-[#72e020] bg-[#0c3308] text-[#8cff30]" />,
  Bridge: <AdobeTile text="Br" tile="border-[#d8a818] bg-[#332606] text-[#e8b820]" />,
  Word: (
    <DockArt>
      <path d="M4 6q0 22 5 23 5 0 8-15-1 15 4 15 6-1 7-11" fill="none" stroke="#3d77bd" strokeWidth="6" strokeLinecap="round" strokeLinejoin="round" />
      <path d="M3 6q0 20 4 21M17 17q-1 10 3 11" fill="none" stroke="#8bb6e4" strokeWidth="1.800" />
      <path d="M33 13v15" stroke="#3d77bd" strokeWidth="4" />
    </DockArt>
  ),
  Excel: (
    <DockArt>
      <path d="M6 8q5 0 9 9 4 7 13 7h4M27 18q-10 1-16 9" fill="none" stroke="#5aa83c" strokeWidth="6.500" strokeLinecap="round" />
      <circle cx="29" cy="11" r="4" fill="#7cc35c" />
      <circle cx="11" cy="29" r="4.500" fill="#6cb94c" />
      <path d="M5 7q5 0 9 8" fill="none" stroke="#a5dc8a" strokeWidth="1.800" />
    </DockArt>
  ),
  PowerPoint: (
    <DockArt>
      <path d="M5 7q10 3 21 3 6 2 3 7-4 7-12 5" fill="none" stroke="#dd6f34" strokeWidth="6" strokeLinecap="round" />
      <path d="M12 12v18" stroke="#c9551f" strokeWidth="8" strokeLinecap="round" />
      <path d="M5 6q10 3 21 3" fill="none" stroke="#f2aa7c" strokeWidth="1.800" />
    </DockArt>
  ),
  efg: (
    <DockArt>
      <path d="M12 4l19 1 2 22-12 2z" fill="#1f9a62" />
      <path d="M4 12h24v22H4z" fill="#222" transform="rotate(-5 16 23)" />
      <text x="0" y="27" fontSize="17" fontWeight="800" fill="#fff">e</text>
      <text x="9" y="18" fontSize="17" fontWeight="800" fill="#fff">f</text>
      <text x="17" y="29" fontSize="17" fontWeight="800" fill="#fff">g</text>
      <path d="M15 2l17 4-5 3 8 9-3 2-8-8-4 5z" fill="#ee6b2c" stroke="#fff" strokeWidth=".6" />
    </DockArt>
  ),
  iTunes: (
    <DockArt>
      <circle cx="18" cy="18" r="15" fill="#e5293f" stroke="#f3dfe2" strokeWidth="1.500" />
      <path d="M14 25V11l11-2v13" fill="none" stroke="#fff" strokeWidth="2" />
      <ellipse cx="12" cy="25" rx="3" ry="2.400" fill="#fff" />
      <ellipse cx="23" cy="22.500" rx="3" ry="2.400" fill="#fff" />
    </DockArt>
  ),
  Preferences: (
    <DockArt>
      <path d="M3 5h31v27H3z" fill="#b5b5b5" stroke="#ddd" />
      <path d="M5 7h27v23H5z" fill="#4b4b4b" />
      <circle cx="19" cy="20" r="9" fill="none" stroke="#bbb" strokeWidth="4" strokeDasharray="3 1.500" />
      <circle cx="19" cy="20" r="6.500" fill="none" stroke="#ccc" strokeWidth="2" />
      <path d="M19 20V12M19 20l-7 4M19 20l7 4" stroke="#ddd" strokeWidth="2" />
    </DockArt>
  ),
  Notebook: (
    <DockArt>
      <rect x="2" y="2" width="33" height="32" rx="4" fill="#5ab4df" />
      <path d="M9 8h17v20H9z" fill="#fff" />
      <path d="M6 11h5M6 15h5M6 19h5M6 23h5" stroke="#fff" strokeWidth="1.500" />
      <path d="M28 7l-9 13-1 4 4-2 9-13z" fill="#3a7fa8" stroke="#fff" />
    </DockArt>
  ),
  FlashPlayer: (
    <DockArt>
      <path d="M3 3h31v30H3z" fill="#b50f16" />
      <path d="M3 3h31v1.500H3z" fill="#f2b8b8" />
      <path d="M27 9q-6 0-8 7l-2 5q-2 6-7 6M16 17h8" fill="none" stroke="#fff" strokeWidth="3.500" />
    </DockArt>
  ),
  Reader: (
    <DockArt>
      <path d="M2 3h31v30H2z" fill="#b80d12" />
      <path d="M8 27q10-6 10-18-2-3-2 0 2 12 13 15 2-2-2-2-11-1-19 5z" fill="none" stroke="#fff" strokeWidth="1.500" />
    </DockArt>
  ),
  iPhoto: (
    <DockArt>
      <path d="M5 6l24-5 4 22-24 5z" fill="#e8e3cf" />
      <path d="M1 14l24-8 8 20-24 8z" fill="#fff" />
      <path d="M4 15.500l20-6.500 5 14-20 7z" fill="#49678e" />
      <path d="M10 21l6-6 5 4 2 7-12 4z" fill="#b3927a" />
      <circle cx="28" cy="25" r="6.500" fill="#333" />
      <circle cx="28" cy="23" r="3.500" fill="#ddd" />
    </DockArt>
  ),
  QuickTime: (
    <DockArt>
      <circle cx="18" cy="18" r="15.500" fill="#77828f" />
      <circle cx="18" cy="18" r="12" fill="none" stroke="#39424f" strokeWidth="4" />
      <circle cx="18" cy="18" r="10" fill="#4d93f2" />
      <path d="M21 21l10 11" stroke="#666d78" strokeWidth="6" />
    </DockArt>
  ),
  Folder: <Folder className="mt-1 h-[29px] w-8" />,
  Documents: (
    <DockArt>
      <path d="M4 10h28v20H4z" fill="#88b6cc" />
      <path d="M7 5h17l6 6v22H7z" fill="#f5f5f5" />
      <path d="M24 5v6h6z" fill="#aaa" />
    </DockArt>
  ),
  Tutors: <Drive text="TUTORS" />,
  Users: <Drive text="USERS" />,
  Notes: (
    <DockArt>
      <path d="M1 9h33v19H1z" fill="#f4f4f4" />
      <path d="M4 12h10M4 15h6M16 14h8M16 18h9M4 21h14M26 12h6" stroke="#777" />
      <rect x="22" y="23" width="12" height="12" rx="2" fill="#4fb0de" />
      <path d="M26 26h4v6h-4z" fill="#fff" />
    </DockArt>
  ),
  Browser: (
    <DockArt>
      <path d="M1 9h33v19H1z" fill="#333" />
      <path d="M2 11h10v3H2zM14 10h6v4h-6zM23 11h10v4H23zM2 22h8v4H2z" fill="#bd8a60" />
      <path d="M2 16h20v4H2zM12 22h8v4h-8z" fill="#eee" />
      <circle cx="28" cy="29" r="6.500" fill="#e2591e" />
      <circle cx="29" cy="28" r="4" fill="#2b5ca8" />
    </DockArt>
  ),
  Trash: (
    <DockArt>
      <path d="M5 5l4 27q9 4 18 0l4-27z" fill="#8a8a8a" />
      <path d="M8 8l14 24M13 8l12 22M19 8l8 16M28 8L14 32M23 8L10 28M17 8l-8 14" stroke="#444" strokeWidth="1.200" />
      <ellipse cx="18" cy="6" rx="13.500" ry="3.500" fill="#eee" stroke="#888" />
    </DockArt>
  ),
};

function Drive({ text }: { text: string }) {
  return (
    <DockArt>
      <path d="M0 0h36v36H0z" fill={text === 'USERS' ? '#f4f4f4' : '#d2d2d2'} />
      <path d="M6 3h24l2 22H4z" fill="#aaa" />
      <circle cx="18" cy="11" r="9.500" fill="#8a8f94" />
      <path d="M11 6q4-3 6 0l-1 5-3 3zM20 5q5 0 6 5l-3 4z" fill="#ddd" />
      <path d="M4 28h28v6H4z" fill="#444" />
      <circle cx="24" cy="31" r="1.600" fill="#7be04a" />
      <text x="18" y="27" fontSize={text === 'USERS' ? 10 : 7} fontWeight="700" textAnchor="middle" fill="#cf1620" fontFamily="'Liberation Serif', serif">{text}</text>
    </DockArt>
  );
}

const dockOrder = [
  'Finder', 'Safari', 'Firefox', 'Chrome', '-', 'Photoshop', 'Lightroom', 'Illustrator', 'InDesign', 'Flash', 'Dreamweaver', 'Bridge', '-',
  'Word', 'Excel', 'PowerPoint', '-', 'efg', 'iTunes', 'Preferences', 'Notebook', 'FlashPlayer', 'Reader', 'iPhoto', 'QuickTime', '|',
  'Folder', 'Documents', 'Tutors', 'Users', 'Notes', 'Browser', 'Trash',
];
const running = ['Finder', 'Safari', 'Firefox', 'Photoshop', 'InDesign', 'Dreamweaver', 'Word', 'Notebook', 'Reader', 'iPhoto', 'QuickTime'];

const Dock = () => (
  <footer className="absolute inset-x-0 bottom-0 h-[46px] pr-[31px] pl-[34px]">
    <div className="absolute inset-x-[17px] bottom-0.5 h-7 bg-linear-to-b from-[#a5a5a5] to-[#d2d2d2] [clip-path:polygon(16px_0,calc(100%-16px)_0,100%_100%,0_100%)]" />
    <div className="absolute inset-x-[17px] bottom-0 h-0.5 bg-[#999]" />
    <div className="relative flex h-full">
      {dockOrder.map((name, i) => {
        if (name === '-') return <span key={i} className="flex-1" />;
        if (name === '|') {
          return (
            <span key={i} className="flex flex-[0.5] justify-center pt-5">
              <svg viewBox="0 0 8 22" className="h-[22px] w-2"><path d="M0 0l7 21" stroke="#888" /></svg>
            </span>
          );
        }
        return (
          <a key={i} href="#" aria-label={name} className="flex min-w-0 flex-1 flex-col items-center justify-between">
            <span className="flex h-9 items-center">{dockItems[name]}</span>
            {running.includes(name) && <span className="h-0.5 w-2.5 rounded-full bg-white shadow-[0_0_4px_1px_#8fd0f5]" />}
          </a>
        );
      })}
    </div>
  </footer>
);

const App: React.FC = () => (
  <div className="relative flex h-screen min-h-[640px] flex-col overflow-hidden bg-[#535353] font-['Noto_Sans','Open_Sans',sans-serif]">
    <MenuBar />
    <AppBar />
    <ControlBar />
    <main className="relative flex flex-1 items-start">
      <Desktop />
      <section aria-label="Document" className="absolute top-0 bottom-[51px] left-[15px] w-[750px] overflow-hidden rounded-b-md bg-[#868686] shadow-lg">
        <CoverDrawing />
      </section>
      <Toolbar />
      <PagesPanel />
      <PanelDock />
    </main>
    <Dock />
    <div className="pointer-events-none absolute inset-x-0 top-[172px] flex justify-center *:pointer-events-auto">
      <NewDocumentDialog />
    </div>
  </div>
);

export default App;
